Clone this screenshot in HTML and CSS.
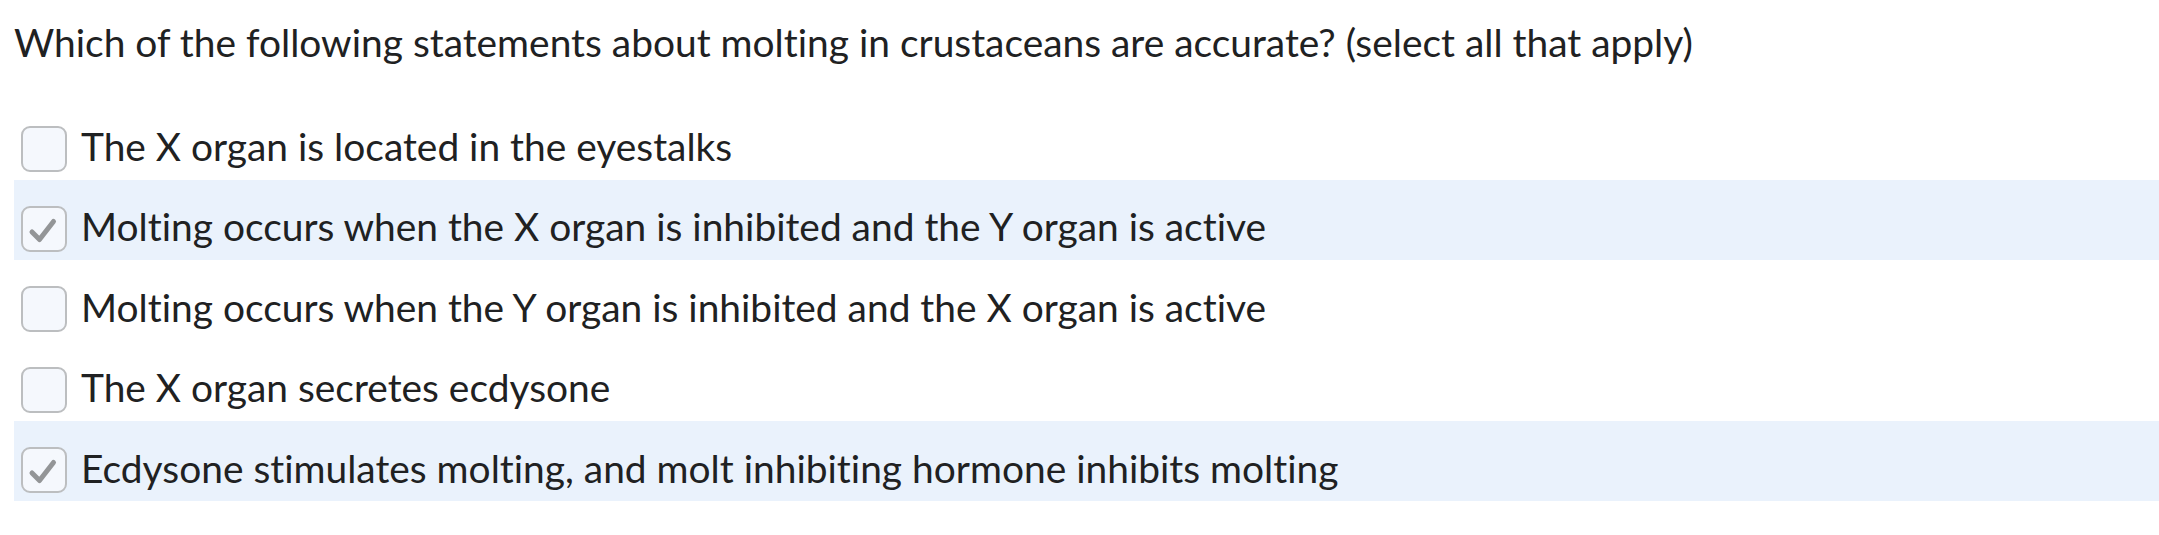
FILE: index.html
```html
<!DOCTYPE html>
<html lang="en">
<head>
<meta charset="utf-8">
<title>Question</title>
<link rel="stylesheet" href="styles.css">
</head>
<body>
<div class="question">
  <p class="prompt">Which of the following statements about molting in crustaceans are accurate? (select all that apply)</p>
  <ul class="options">
    <li class="option">
      <span class="box"></span>
      <span class="label">The X organ is located in the eyestalks</span>
    </li>
    <li class="option selected">
      <span class="box"><svg viewBox="0 0 42 42" class="check"><path d="M9 24L16.5 31.5L30.5 13.5" /></svg></span>
      <span class="label">Molting occurs when the X organ is inhibited and the Y organ is active</span>
    </li>
    <li class="option">
      <span class="box"></span>
      <span class="label">Molting occurs when the Y organ is inhibited and the X organ is active</span>
    </li>
    <li class="option">
      <span class="box"></span>
      <span class="label">The X organ secretes ecdysone</span>
    </li>
    <li class="option selected">
      <span class="box"><svg viewBox="0 0 42 42" class="check"><path d="M9 24L16.5 31.5L30.5 13.5" /></svg></span>
      <span class="label">Ecdysone stimulates molting, and molt inhibiting hormone inhibits molting</span>
    </li>
  </ul>
</div>
</body>
</html>
```
FILE: styles.css
```css
html, body {
  margin: 0;
  padding: 0;
  background: #ffffff;
}
body {
  font-family: Lato, "Noto Sans", sans-serif;
  color: #202122;
  font-variant-ligatures: none;
}
.question {
  padding: 0 0 0 14px;
}
.prompt {
  margin: 0;
  padding-top: 19.6px;
  font-size: 38.9px;
  line-height: 44px;
  height: 99.5px;
  box-sizing: border-box;
  white-space: nowrap;
}
.options {
  list-style: none;
  margin: 0;
  padding: 0;
}
.option {
  display: flex;
  align-items: flex-start;
  gap: 14px;
  height: 80.4px;
  box-sizing: border-box;
  padding: 24.6px 0 0 7px;
}
.option.selected {
  background: #eaf2fc;
}
.box {
  flex: none;
  margin-top: 1.5px;
  width: 46px;
  height: 46px;
  box-sizing: border-box;
  border: 2px solid #bcbec0;
  border-radius: 9px;
  background: #f5f8fd;
  display: flex;
  align-items: center;
  justify-content: center;
}
.check {
  width: 42px;
  height: 42px;
  fill: none;
  stroke: #939597;
  stroke-width: 5;
  stroke-linecap: round;
  stroke-linejoin: round;
}
.label {
  font-size: 38.9px;
  line-height: 44px;
  white-space: nowrap;
}
```
